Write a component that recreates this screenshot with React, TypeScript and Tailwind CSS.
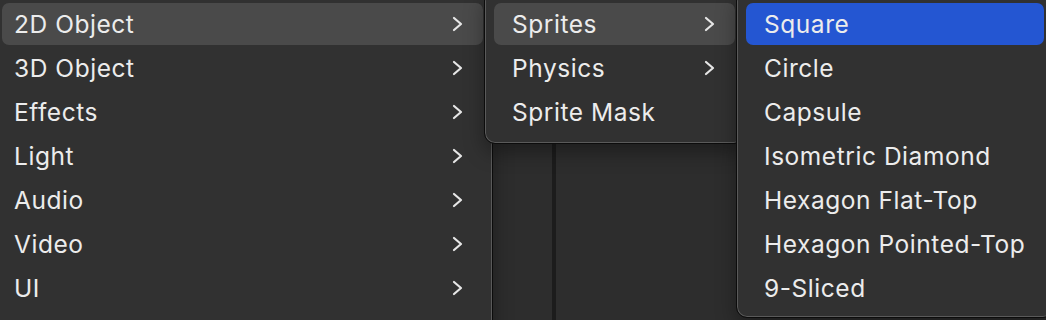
const Chevron = () => (
  <svg width="11" height="16" viewBox="0 0 11 16" fill="none" className="shrink-0">
    <path d="M2 2 L9 8 L2 14" stroke="#e6e6e6" strokeWidth="2.2" strokeLinecap="round" strokeLinejoin="round" />
  </svg>
);

type Item = { label: string; sub?: boolean };

const Row = ({ item, active, blue, padLeft }: { item: Item; active?: boolean; blue?: boolean; padLeft: string }) => (
  <div
    className={`h-[42px] flex items-center justify-between rounded-[7px] pr-[20px] ${padLeft} ${
      blue ? "bg-[#2456d2]" : active ? "bg-[#4a4a4a]" : ""
    }`}
  >
    <span className="whitespace-nowrap text-[24.5px] leading-none text-[#ececec] tracking-[0.55px] pt-[1px]">
      {item.label}
    </span>
    {item.sub && <Chevron />}
  </div>
);

const main: Item[] = [
  { label: "2D Object", sub: true },
  { label: "3D Object", sub: true },
  { label: "Effects", sub: true },
  { label: "Light", sub: true },
  { label: "Audio", sub: true },
  { label: "Video", sub: true },
  { label: "UI", sub: true },
];

const sprites: Item[] = [
  { label: "Sprites", sub: true },
  { label: "Physics", sub: true },
  { label: "Sprite Mask" },
];

const shapes: Item[] = [
  { label: "Square" },
  { label: "Circle" },
  { label: "Capsule" },
  { label: "Isometric Diamond" },
  { label: "Hexagon Flat-Top" },
  { label: "Hexagon Pointed-Top" },
  { label: "9-Sliced" },
];

const menuShell =
  "absolute bg-[#313131] border border-[#0c0c0c] rounded-[11px] shadow-[inset_0_0_0_1px_rgba(255,255,255,0.2),0_8px_20px_rgba(0,0,0,0.35)] flex flex-col gap-[2px] px-[9px]";

export default function App() {
  return (
    <div
      className="relative w-[1046px] h-[320px] overflow-hidden bg-[#2d2d2d]"
      style={{ fontFamily: "Inter, 'Noto Sans', sans-serif" }}
    >
      {/* app window behind the menus */}
      <div className="absolute left-[552px] top-[140px] w-[4px] h-[200px] bg-[#1c1c1c]" />

      <div className={`${menuShell} left-[-8px] top-[-10px] w-[501px] h-[350px] pt-[12px]`}>
        {main.map((it, i) => (
          <Row key={it.label} item={it} active={i === 0} padLeft="pl-[12px]" />
        ))}
      </div>

      <div className={`${menuShell} left-[484px] top-[-10px] w-[261px] h-[154px] pt-[12px]`}>
        {sprites.map((it, i) => (
          <Row key={it.label} item={it} active={i === 0} padLeft="pl-[18px]" />
        ))}
      </div>

      <div className={`${menuShell} left-[736px] top-[-10px] w-[318px] h-[328px] pt-[12px]`}>
        {shapes.map((it, i) => (
          <Row key={it.label} item={it} blue={i === 0} padLeft="pl-[18px]" />
        ))}
      </div>
    </div>
  );
}
